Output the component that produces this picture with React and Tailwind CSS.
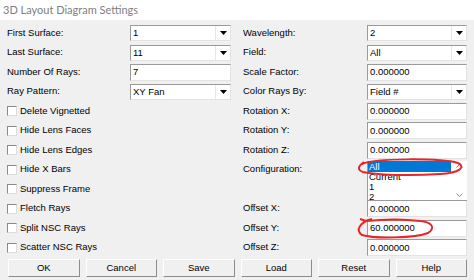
import React from "react";

function Arrow() {
  return (
    <div className="flex h-full w-[15px] items-center justify-center border-l border-[#e6e6e6] bg-white">
      <svg width="7" height="4" viewBox="0 0 7 4">
        <path d="M0 0H7L3.5 4Z" fill="#000" />
      </svg>
    </div>
  );
}

function Select({ value, w = "w-[101px]" }) {
  return (
    <div className={`flex h-[16px] ${w} items-center border-t border-l border-[#9a9a9a] border-r border-b border-r-[#e3e3e3] border-b-[#e3e3e3] bg-white`}>
      <span className="flex-1 pl-[2px] leading-none">{value}</span>
      <Arrow />
    </div>
  );
}

function TextBox({ value, w = "w-[101px]" }) {
  return (
    <div className={`flex h-[17px] ${w} items-center border-t border-l border-[#9a9a9a] border-r border-b border-r-[#e3e3e3] border-b-[#e3e3e3] bg-white`}>
      <span className="pl-[2px] leading-none">{value}</span>
    </div>
  );
}

function LRow({ label, children }) {
  return (
    <div className="flex h-[19.5px] items-center">
      <div className="w-[123px]">{label}</div>
      {children}
    </div>
  );
}

function RRow({ label, children }) {
  return (
    <div className="flex h-[19.5px] items-center">
      <div className="w-[124px]">{label}</div>
      {children}
    </div>
  );
}

function Check({ label }) {
  return (
    <div className="flex h-[19.5px] items-center">
      <div className="h-[10px] w-[10px] border-t border-l border-[#8a8a8a] border-r border-b border-r-[#dcdcdc] border-b-[#dcdcdc] bg-white" />
      <span className="ml-[3px]">{label}</span>
    </div>
  );
}

function Btn({ children }) {
  return (
    <div className="flex h-[18px] flex-1 items-center justify-center border-t border-l border-white border-r border-b border-r-[#8c8c8c] border-b-[#8c8c8c] bg-[#f0f0f0]">
      {children}
    </div>
  );
}

export default function App() {
  return (
    <div
      className="relative h-[280px] w-[474px] overflow-hidden bg-[#f0f0f0] text-[9.5px] text-black"
      style={{ fontFamily: '"Liberation Sans", Arial, sans-serif' }}
    >
      <div
        className="flex h-[20px] items-center bg-white pl-[3px] text-[11px] text-[#808080]"
        style={{ fontFamily: 'Lato, "Noto Sans", sans-serif' }}
      >
        3D Layout Diagram Settings
      </div>
      <div className="flex pt-[3.25px]">
        <div className="w-[236px] pl-[7px]">
          <LRow label="First Surface:"><Select value="1" /></LRow>
          <LRow label="Last Surface:"><Select value="11" /></LRow>
          <LRow label="Number Of Rays:"><TextBox value="7" /></LRow>
          <LRow label="Ray Pattern:"><Select value="XY Fan" /></LRow>
          <Check label="Delete Vignetted" />
          <Check label="Hide Lens Faces" />
          <Check label="Hide Lens Edges" />
          <Check label="Hide X Bars" />
          <Check label="Suppress Frame" />
          <Check label="Fletch Rays" />
          <Check label="Split NSC Rays" />
          <Check label="Scatter NSC Rays" />
        </div>
        <div className="w-[238px] pl-[7px]">
          <RRow label="Wavelength:"><Select value="2" w="w-[100px]" /></RRow>
          <RRow label="Field:"><Select value="All" w="w-[100px]" /></RRow>
          <RRow label="Scale Factor:"><TextBox value="0.000000" w="w-[100px]" /></RRow>
          <RRow label="Color Rays By:"><Select value="Field #" w="w-[100px]" /></RRow>
          <RRow label="Rotation X:"><TextBox value="0.000000" w="w-[100px]" /></RRow>
          <RRow label="Rotation Y:"><TextBox value="0.000000" w="w-[100px]" /></RRow>
          <RRow label="Rotation Z:"><TextBox value="0.000000" w="w-[100px]" /></RRow>
          <div className="flex h-[39px] items-start">
            <div className="flex h-[19.5px] w-[124px] items-center">Configuration:</div>
            <div className="relative mt-[1.5px] h-[40px] w-[100px] overflow-hidden border-l border-b border-[#9a9a9a] bg-white">
              <div className="flex h-[11px] w-[83px] items-center overflow-hidden bg-[#0078d7] pl-[1px] leading-[11px] text-white">All</div>
              <div className="flex h-[10px] items-center overflow-hidden pl-[1px] leading-[10px]">Current</div>
              <div className="flex h-[10px] items-center overflow-hidden pl-[1px] leading-[10px]">1</div>
              <div className="h-[8px] overflow-hidden pl-[1px] leading-[10px]">2</div>
              <div className="absolute right-0 top-0 flex h-full w-[16px] flex-col items-center justify-between bg-white py-[3px]">
                <svg width="7" height="4" viewBox="0 0 7 4"><path d="M0.5 3.5L3.5 0.5L6.5 3.5" fill="none" stroke="#888" /></svg>
                <svg width="7" height="4" viewBox="0 0 7 4"><path d="M0.5 0.5L3.5 3.5L6.5 0.5" fill="none" stroke="#888" /></svg>
              </div>
            </div>
          </div>
          <RRow label="Offset X:"><TextBox value="0.000000" w="w-[100px]" /></RRow>
          <RRow label="Offset Y:"><TextBox value="60.000000" w="w-[100px]" /></RRow>
          <RRow label="Offset Z:"><TextBox value="0.000000" w="w-[100px]" /></RRow>
        </div>
      </div>
      <div className="mt-[2px] flex gap-[6px] pl-[8px] pr-[7px]">
        <Btn>OK</Btn>
        <Btn>Cancel</Btn>
        <Btn>Save</Btn>
        <Btn>Load</Btn>
        <Btn>Reset</Btn>
        <Btn>Help</Btn>
      </div>
      <svg className="pointer-events-none absolute left-0 top-0" width="474" height="280">
        <path d="M362 164 C 375 158, 440 158, 458 163 C 466 167, 460 173, 440 174 C 410 176, 375 175, 363 172 C 357 170, 358 166, 364 162" fill="none" stroke="#e8262a" strokeWidth="2" />
        <path d="M372 219 C 360 222, 355 230, 362 235 C 375 239, 415 238, 428 233 C 436 228, 432 222, 420 221 C 405 219, 385 219, 366 221 L 360 219" fill="none" stroke="#e8262a" strokeWidth="2" />
      </svg>
    </div>
  );
}
